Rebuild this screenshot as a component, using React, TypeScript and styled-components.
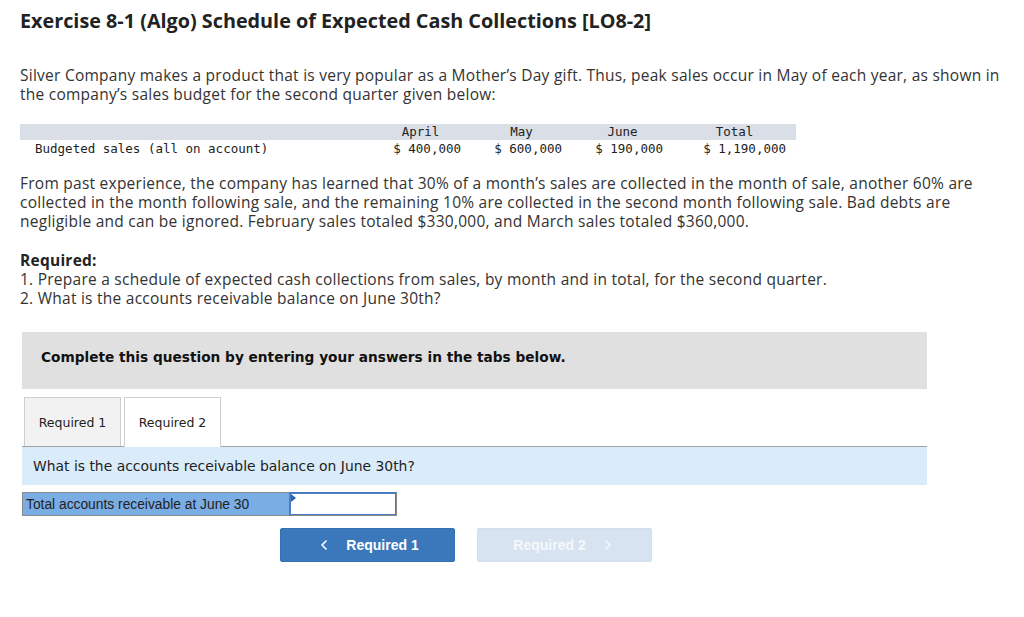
import React from "react";
import styled, { createGlobalStyle } from "styled-components";
import { ChevronLeft, ChevronRight } from "lucide-react";

const GlobalStyle = createGlobalStyle`
    body {
        margin: 0;
        background: #ffffff;
        font-family: "Open Sans", Arial, sans-serif;
        color: #333;
    }
`;

const Page = styled.div`
    width: 1024px;
    padding: 0 20px;
    box-sizing: border-box;
`;

const Title = styled.h1`
    margin: 0;
    padding-top: 9px;
    font-size: 19.8px;
    line-height: 24px;
    font-weight: 700;
    color: #222;
`;

const Para = styled.p<{ $top?: number }>`
    margin: ${(p) => p.$top ?? 0}px 0 0;
    font-size: 15.5px;
    line-height: 19px;
    color: #333;
    letter-spacing: 0.25px;
    white-space: nowrap;
`;

const Strong = styled.strong`
    font-weight: 700;
    color: #222;
`;

const BudgetTable = styled.div`
    margin-top: 20px;
    display: grid;
    grid-template-columns: 350px 101px 101px 101px 123px;
    font-family: "DejaVu Sans Mono", "Liberation Mono", monospace;
    font-size: 12.5px;
    line-height: 16px;
    color: #222;
`;

const HeadCell = styled.div`
    background: #d9dee7;
    text-align: center;
    height: 16px;
`;

const RowLabel = styled.div`
    padding: 1px 0 0 15px;
    height: 17px;
`;

const ValueCell = styled.div`
    text-align: right;
    padding: 1px 10px 0 0;
    height: 17px;
`;

const Instructions = styled.div`
    margin: 24px 0 0 2px;
    width: 905px;
    height: 57px;
    background: #e0e0e0;
    display: flex;
    align-items: center;
    padding: 0 0 8px 19px;
    box-sizing: border-box;
    font-family: "DejaVu Sans", Verdana, sans-serif;
    font-size: 13.7px;
    font-weight: 700;
    color: #111;
`;

const Panel = styled.div`
    margin: 8px 0 0 2px;
    width: 905px;
`;

const TabBar = styled.div`
    display: flex;
    gap: 3px;
    padding-left: 2px;
    border-bottom: 1px solid #a3a3a3;
    height: 49px;
    align-items: flex-end;
`;

const Tab = styled.div<{ $active?: boolean }>`
    width: 97px;
    box-sizing: border-box;
    border: 1px solid #cfcfcf;
    border-bottom: none;
    background: ${(p) => (p.$active ? "#ffffff" : "#f2f2f2")};
    display: flex;
    align-items: center;
    justify-content: center;
    font-family: "DejaVu Sans", Verdana, sans-serif;
    font-size: 12.5px;
    color: #222;
    margin-bottom: ${(p) => (p.$active ? "-1px" : "0")};
    height: ${(p) => (p.$active ? "50px" : "49px")};
`;

const Question = styled.div`
    height: 38px;
    background: #daebf9;
    display: flex;
    align-items: center;
    padding-left: 11px;
    font-family: "DejaVu Sans", Verdana, sans-serif;
    font-size: 13.9px;
    color: #222;
`;

const AnswerRow = styled.div`
    margin-top: 7px;
    display: flex;
`;

const AnswerLabel = styled.div`
    width: 267px;
    height: 24px;
    box-sizing: border-box;
    background: #7aade3;
    border: 1px solid #8a8a8a;
    border-right: none;
    display: flex;
    align-items: center;
    padding-left: 3px;
    font-family: "Liberation Sans", Arial, sans-serif;
    font-size: 13.8px;
    color: #222;
`;

const AnswerInput = styled.div`
    position: relative;
    width: 108px;
    height: 24px;
    box-sizing: border-box;
    background: #fff;
    border: 1px solid #8a8a8a;
    border-top-color: #4a7cc0;
    border-left-color: #4a7cc0;
    box-shadow: inset 0 0 0 1px #4a7cc0;
`;

const Flag = styled.span`
    position: absolute;
    top: 1px;
    left: 1px;
    width: 0;
    height: 0;
    border-top: 4px solid transparent;
    border-bottom: 4px solid transparent;
    border-left: 5px solid #2c62ad;
`;

const NavRow = styled.div`
    margin-top: 12px;
    display: flex;
    gap: 22px;
    padding-left: 258px;
`;

const NavButton = styled.div<{ $disabled?: boolean }>`
    width: 175px;
    height: 34px;
    box-sizing: border-box;
    border-radius: 2px;
    background: ${(p) => (p.$disabled ? "#d7e3f0" : "#3a77bb")};
    border: 1px solid ${(p) => (p.$disabled ? "#d2dfee" : "#3570b3")};
    color: ${(p) => (p.$disabled ? "#f4f8fc" : "#ffffff")};
    display: flex;
    align-items: center;
    justify-content: center;
    gap: 14px;
    font-family: "Liberation Sans", Arial, sans-serif;
    font-weight: 700;
    font-size: 14px;
`;

export default function App() {
    return (
        <Page>
            <GlobalStyle />
            <Title>Exercise 8-1 (Algo) Schedule of Expected Cash Collections [LO8-2]</Title>
            <Para $top={33}>
                Silver Company makes a product that is very popular as a Mother’s Day gift. Thus, peak sales occur in May of each year, as shown in
                <br />
                the company’s sales budget for the second quarter given below:
            </Para>
            <BudgetTable>
                <HeadCell />
                <HeadCell>April</HeadCell>
                <HeadCell>May</HeadCell>
                <HeadCell>June</HeadCell>
                <HeadCell>Total</HeadCell>
                <RowLabel>Budgeted sales (all on account)</RowLabel>
                <ValueCell>$ 400,000</ValueCell>
                <ValueCell>$ 600,000</ValueCell>
                <ValueCell>$ 190,000</ValueCell>
                <ValueCell>$ 1,190,000</ValueCell>
            </BudgetTable>
            <Para $top={16}>
                From past experience, the company has learned that 30% of a month’s sales are collected in the month of sale, another 60% are
                <br />
                collected in the month following sale, and the remaining 10% are collected in the second month following sale. Bad debts are
                <br />
                negligible and can be ignored. February sales totaled $330,000, and March sales totaled $360,000.
            </Para>
            <Para $top={20}>
                <Strong>Required:</Strong>
                <br />
                1. Prepare a schedule of expected cash collections from sales, by month and in total, for the second quarter.
                <br />
                2. What is the accounts receivable balance on June 30th?
            </Para>
            <Instructions>Complete this question by entering your answers in the tabs below.</Instructions>
            <Panel>
                <TabBar>
                    <Tab>Required 1</Tab>
                    <Tab $active>Required 2</Tab>
                </TabBar>
                <Question>What is the accounts receivable balance on June 30th?</Question>
                <AnswerRow>
                    <AnswerLabel>Total accounts receivable at June 30</AnswerLabel>
                    <AnswerInput>
                        <Flag />
                    </AnswerInput>
                </AnswerRow>
                <NavRow>
                    <NavButton>
                        <ChevronLeft size={16} strokeWidth={2.5} />
                        <span>Required 1</span>
                    </NavButton>
                    <NavButton $disabled>
                        <span>Required 2</span>
                        <ChevronRight size={16} strokeWidth={2.5} />
                    </NavButton>
                </NavRow>
            </Panel>
        </Page>
    );
}
